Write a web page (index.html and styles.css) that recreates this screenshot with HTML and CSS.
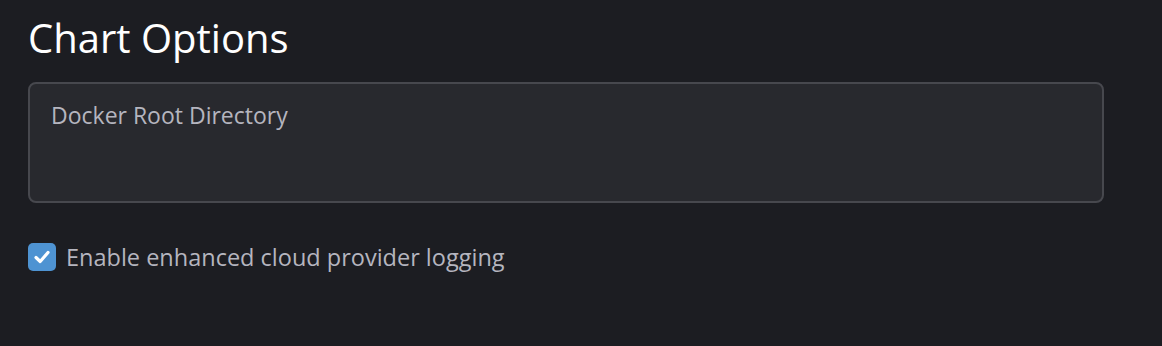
FILE: index.html
```html
<!DOCTYPE html>
<html>
<head>
<meta charset="utf-8">
<link rel="stylesheet" href="styles.css">
</head>
<body>
<main class="page">
  <h1 class="title">Chart Options</h1>
  <div class="field">
    <label class="field-label">Docker Root Directory</label>
  </div>
  <label class="check">
    <span class="box">
      <svg viewBox="0 0 28 28" width="28" height="28"><path d="M8 14.5 L12.2 18.5 L20 9.5" fill="none" stroke="#ffffff" stroke-width="3.2" stroke-linecap="round" stroke-linejoin="round"/></svg>
    </span>
    <span class="check-text">Enable enhanced cloud provider logging</span>
  </label>
</main>
</body>
</html>
```
FILE: styles.css
```css
html, body {
  margin: 0;
  background: #1c1d22;
  height: 100%;
}
.page {
  font-family: "Open Sans", "Noto Sans", sans-serif;
  padding: 12px 58px 0 28px;
  display: flex;
  flex-direction: column;
}
.title {
  margin: 0;
  font-size: 40px;
  font-weight: 500;
  color: #ffffff;
  line-height: 52px;
}
.field {
  margin-top: 18px;
  border: 2px solid #47484e;
  border-radius: 8px;
  background: #28292e;
  padding: 16px 21px;
  box-sizing: border-box;
  height: 121px;
}
.field-label {
  color: #b5b5bf;
  font-size: 23px;
  line-height: 30px;
}
.check {
  margin-top: 39px;
  display: flex;
  align-items: center;
  gap: 10px;
}
.box {
  width: 28px;
  height: 28px;
  border-radius: 5px;
  background: #4e93d2;
  display: flex;
}
.check-text {
  color: #b5b5bf;
  font-size: 23.5px;
  line-height: 30px;
}
```
